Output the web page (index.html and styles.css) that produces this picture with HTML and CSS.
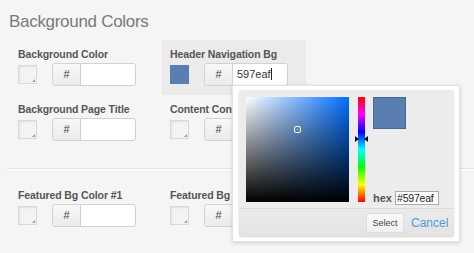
FILE: index.html
```html
<!DOCTYPE html>
<html lang="en">
<head>
  <meta charset="UTF-8">
  <title>Background Colors</title>
  <link rel="stylesheet" href="styles.css">
</head>
<body>
  <div class="page">
    <h2 class="title">Background Colors</h2>

    <div class="row">
      <div class="field">
        <label>Background Color</label>
        <div class="control">
          <span class="swatch"></span>
          <div class="hexgroup"><span class="addon">#</span><span class="hexinput"></span></div>
        </div>
      </div>
      <div class="field active">
        <label>Header Navigation Bg</label>
        <div class="control">
          <span class="swatch filled"></span>
          <div class="hexgroup"><span class="addon">#</span><span class="hexinput">597eaf<i class="caret"></i></span></div>
        </div>

        <div class="picker">
          <div class="picker-inner">
            <div class="picker-body">
              <div class="sv">
                <span class="sv-cursor"></span>
              </div>
              <div class="hue">
                <span class="hue-arrow left"></span>
                <span class="hue-arrow right"></span>
              </div>
              <div class="picker-side">
                <div class="preview"></div>
                <div class="hex-row">
                  <span class="hex-label">hex</span>
                  <span class="hex-field">#597eaf</span>
                </div>
              </div>
            </div>
            <div class="picker-foot">
              <button class="btn-select">Select</button>
              <a class="cancel" href="#">Cancel</a>
            </div>
          </div>
        </div>
      </div>
    </div>

    <div class="row">
      <div class="field">
        <label>Background Page Title</label>
        <div class="control">
          <span class="swatch"></span>
          <div class="hexgroup"><span class="addon">#</span><span class="hexinput"></span></div>
        </div>
      </div>
      <div class="field">
        <label>Content Container Bg</label>
        <div class="control">
          <span class="swatch"></span>
          <div class="hexgroup"><span class="addon">#</span><span class="hexinput"></span></div>
        </div>
      </div>
    </div>

    <div class="divider"></div>

    <div class="row">
      <div class="field">
        <label>Featured Bg Color #1</label>
        <div class="control">
          <span class="swatch"></span>
          <div class="hexgroup"><span class="addon">#</span><span class="hexinput"></span></div>
        </div>
      </div>
      <div class="field">
        <label>Featured Bg Color #2</label>
        <div class="control">
          <span class="swatch"></span>
          <div class="hexgroup"><span class="addon">#</span><span class="hexinput"></span></div>
        </div>
      </div>
    </div>
  </div>
</body>
</html>
```

FILE: styles.css
```css
body {
  margin: 0;
  background: #f5f5f5;
  font-family: "Liberation Sans", Arial, sans-serif;
}
.page {
  padding-left: 10px;
  height: 249px;
  border-bottom: 1px solid #fff;
  box-sizing: border-box;
}
.title {
  margin: 12px 0 8px -1px;
  font-size: 17px;
  line-height: 20px;
  font-weight: normal;
  letter-spacing: -0.3px;
  color: #7a7a7a;
}
.row {
  display: flex;
}
.field {
  width: 144px;
  box-sizing: border-box;
  padding: 8px 8px 9px;
  margin-right: 8px;
}
.field.active {
  position: relative;
  background: #ebebeb;
}
.field label {
  display: block;
  font-size: 10.5px;
  line-height: 13px;
  font-weight: bold;
  letter-spacing: -0.1px;
  color: #555;
  white-space: nowrap;
  margin-bottom: 2px;
}
.control {
  display: flex;
  align-items: center;
  height: 23px;
}
.swatch {
  position: relative;
  width: 19px;
  height: 19px;
  box-sizing: border-box;
  border: 1px solid #d8d8d8;
  background: #f3f3f3;
  box-shadow: inset 1px 1px 2px rgba(0,0,0,0.08);
  margin-right: 15px;
}
.swatch::after {
  content: "";
  position: absolute;
  right: 1px;
  bottom: 1px;
  border-left: 3px solid transparent;
  border-bottom: 3px solid #999;
}
.swatch.filled {
  background: #597eaf;
  border-color: #597eaf;
  box-shadow: none;
}
.swatch.filled::after {
  display: none;
}
.hexgroup {
  display: flex;
  height: 23px;
  border: 1px solid #d2d2d2;
  border-radius: 3px;
  box-sizing: border-box;
  background: #fff;
  overflow: hidden;
}
.addon {
  width: 27px;
  border-right: 1px solid #d2d2d2;
  background: linear-gradient(#f8f8f8, #ebebeb);
  font-size: 11px;
  line-height: 21px;
  text-align: center;
  color: #444;
}
.hexinput {
  width: 50px;
  padding-left: 4px;
  font-size: 11px;
  line-height: 21px;
  color: #333;
  white-space: nowrap;
}
.caret {
  display: inline-block;
  width: 1px;
  height: 12px;
  background: #222;
  vertical-align: -2px;
}
.divider {
  height: 1px;
  background: #e3e3e3;
  border-bottom: 1px solid #fff;
  margin: 18px 0 11px -3px;
}

/* colour picker popup */
.picker {
  position: absolute;
  left: 70px;
  top: 45px;
  z-index: 10;
  width: 228px;
  height: 157px;
  box-sizing: border-box;
  padding: 4px 5px 5px 6px;
  background: #fff;
  border: 1px solid #e2e2e2;
  box-shadow: 0 1px 4px rgba(0,0,0,0.15);
}
.picker-inner {
  height: 100%;
  display: flex;
  flex-direction: column;
  background: #ececec;
  border-radius: 3px;
  box-shadow: 0 1px 2px rgba(0,0,0,0.18);
  overflow: hidden;
}
.picker-body {
  display: flex;
  height: 118px;
  box-sizing: border-box;
  padding: 7px 7px 0 7px;
}
.sv {
  position: relative;
  width: 104px;
  height: 105px;
  background: linear-gradient(to top, #000, rgba(0,0,0,0)), linear-gradient(to right, #fff, #006eff);
}
.sv-cursor {
  position: absolute;
  left: 48px;
  top: 29px;
  width: 5px;
  height: 5px;
  border: 1px solid #fff;
  border-radius: 2px;
}
.sv-cursor::after {
  content: "";
  position: absolute;
  left: 2px;
  top: 2px;
  width: 1px;
  height: 1px;
  background: #fff;
}
.hue {
  position: relative;
  width: 7px;
  height: 105px;
  margin-left: 9px;
  background: linear-gradient(#f00 0%, #f0f 16.66%, #00f 33.33%, #0ff 50%, #0f0 66.66%, #ff0 83.33%, #f00 100%);
}
.hue-arrow {
  position: absolute;
  top: 39px;
  border-top: 3px solid transparent;
  border-bottom: 3px solid transparent;
}
.hue-arrow.left {
  left: -3px;
  border-left: 4px solid #111;
}
.hue-arrow.right {
  right: -3px;
  border-right: 4px solid #111;
}
.picker-side {
  flex: 1;
  display: flex;
  flex-direction: column;
  justify-content: space-between;
  margin-left: 8px;
  padding-bottom: 3px;
}
.preview {
  width: 33px;
  height: 32px;
  box-sizing: border-box;
  background: #597eaf;
  border: 1px solid #4a6890;
}
.hex-row {
  display: flex;
  align-items: center;
  margin-right: 8px;
  justify-content: flex-end;
}
.hex-label {
  font-size: 11px;
  font-weight: bold;
  color: #555;
  margin-right: 3px;
}
.hex-field {
  width: 44px;
  height: 14px;
  box-sizing: border-box;
  border: 1px solid #aaa;
  background: #fff;
  font-size: 10.5px;
  letter-spacing: -0.2px;
  line-height: 12px;
  padding-left: 1px;
  color: #222;
  white-space: nowrap;
  overflow: hidden;
}
.picker-foot {
  flex: 1;
  display: flex;
  align-items: center;
  border-top: 1px solid #dadada;
  background: linear-gradient(#ebebeb, #e3e3e3);
  padding-left: 127px;
}
.btn-select {
  width: 38px;
  height: 20px;
  padding: 0;
  border: 1px solid #ddd;
  border-radius: 2px;
  background: linear-gradient(#fafafa, #f0f0f0);
  font-family: "Liberation Sans", Arial, sans-serif;
  font-size: 9px;
  color: #444;
}
.cancel {
  margin-left: 7px;
  font-size: 12px;
  color: #4d9ad6;
  text-decoration: none;
}
```
